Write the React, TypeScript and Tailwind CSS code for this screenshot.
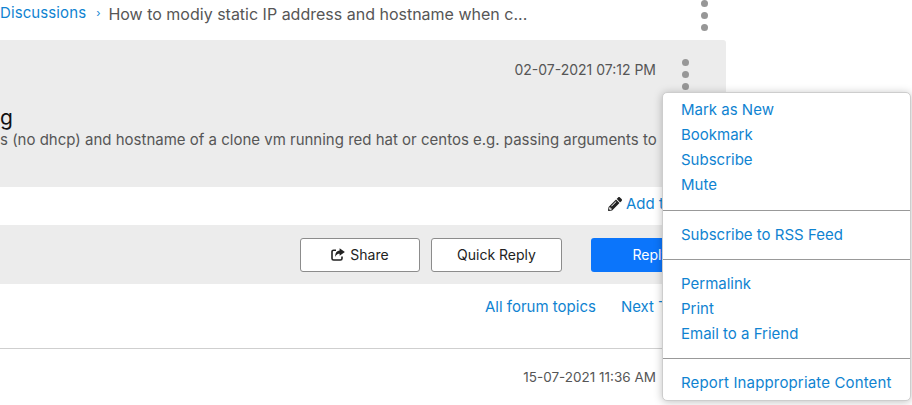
import React from 'react';
import { FaPencilAlt } from 'react-icons/fa';

const Dots = () => (
  <div className="flex flex-col gap-[5px]">
    <div className="w-[7px] h-[7px] rounded-full bg-[#979797]"></div>
    <div className="w-[7px] h-[7px] rounded-full bg-[#979797]"></div>
    <div className="w-[7px] h-[7px] rounded-full bg-[#979797]"></div>
  </div>
);

const ShareIcon = () => (
  <svg width="14" height="13" viewBox="0 0 14 13" fill="none">
    <path d="M5 2.2H2.6A1.6 1.6 0 0 0 1 3.8v6.6A1.6 1.6 0 0 0 2.6 12h6.8A1.6 1.6 0 0 0 11 10.4V8.5" stroke="#222" strokeWidth="1.6" />
    <path d="M8.6 0.2 13.9 4 8.6 7.8V5.8C6.6 5.8 5.2 6.6 4.2 9 3.9 4.8 5.8 2.6 8.6 2.4Z" fill="#222" />
  </svg>
);

const menuGroups = [
  ['Mark as New', 'Bookmark', 'Subscribe', 'Mute'],
  ['Subscribe to RSS Feed'],
  ['Permalink', 'Print', 'Email to a Friend'],
  ['Report Inappropriate Content'],
];

const App: React.FC = () => {
  return (
    <div className="relative w-[912px] h-[405px] overflow-hidden bg-white text-[14px] text-[#565656] font-['Inter','Liberation_Sans',sans-serif]">
      {/* Breadcrumb */}
      <div className="w-[726px] h-[40px] flex justify-between pr-[18px]">
        <div className="flex items-center h-[27px] text-[16px] whitespace-nowrap">
          <span className="text-[#0f83d1] text-[15px] tracking-[0.1px]">Discussions</span>
          <span className="ml-[10px] mr-[8px] text-[#0f83d1] text-[11px]">›</span>
          <span>How to modiy static IP address and hostname when c...</span>
        </div>
        <div className="-mt-[0.5px]">
          <Dots />
        </div>
      </div>

      {/* Post */}
      <div className="w-[726px] h-[147px] bg-[#ececec] rounded-tr-[3px]">
        <div className="flex justify-end items-start pr-[37px] pt-[19px]">
          <span className="mt-[1px] mr-[26px] leading-[20px] whitespace-nowrap">02-07-2021 07:12 PM</span>
          <Dots />
        </div>
        <div className="text-[21px] leading-[24px] text-[#111] mt-[16px]">g</div>
        <div className="leading-[20px] text-[15px] whitespace-nowrap overflow-hidden">s (no dhcp) and hostname of a clone vm running red hat or centos e.g. passing arguments to</div>
      </div>

      {/* Tags */}
      <div className="w-[726px] h-[38px] flex items-start pt-[7px] pl-[608px] text-[15px] text-[#0f83d1] whitespace-nowrap">
        <FaPencilAlt className="text-[14px] text-[#222] mr-[4px] mt-[3px]" />
        <span className="leading-[20px]">Add tags</span>
      </div>

      {/* Actions */}
      <div className="w-[726px] h-[59px] bg-[#ececec] flex items-center pl-[300px]">
        <button className="w-[120px] h-[34px] border border-[#8c8c8c] rounded-[3px] bg-white flex items-center justify-center gap-[5px] text-[#222]">
          <ShareIcon />
          <span>Share</span>
        </button>
        <button className="ml-[11px] w-[131px] h-[34px] border border-[#8c8c8c] rounded-[3px] bg-white text-[#222]">Quick Reply</button>
        <button className="ml-[29px] w-[120px] h-[34px] rounded-[3px] bg-[#0b75fb] text-white">Reply</button>
      </div>

      {/* Topic links */}
      <div className="w-[726px] h-[65px] border-b border-[#cfcfcf] pl-[485px] pt-[13px] text-[15px] text-[#0f83d1] flex gap-[25px] whitespace-nowrap">
        <span className="leading-[20px]">All forum topics</span>
        <span className="leading-[20px]">Next Topic</span>
      </div>

      {/* Next post */}
      <div className="w-[726px] flex justify-end pr-[70px] pt-[18px]">
        <span className="leading-[20px] text-[13.5px] whitespace-nowrap">15-07-2021 11:36 AM</span>
      </div>

      {/* Dropdown menu */}
      <div className="absolute left-[662px] top-[92px] w-[249px] h-[309px] bg-white border border-[#cdcdcd] rounded-[5px] shadow-[0_1px_8px_rgba(0,0,0,0.25)] text-[15px] text-[#0f83d1]">
        {menuGroups.map((group, i) => (
          <div key={i} className={i > 0 ? 'border-t border-[#999] pt-[11px] pb-[12px]' : 'pt-[4px] pb-[13px]'}>
            {group.map((item) => (
              <div key={item} className={i === 3 ? 'h-[25px] leading-[25px] pl-[18px] whitespace-nowrap tracking-[0.15px]' : 'h-[25px] leading-[25px] pl-[18px] whitespace-nowrap'}>{item}</div>
            ))}
          </div>
        ))}
      </div>
    </div>
  );
};

export default App;
